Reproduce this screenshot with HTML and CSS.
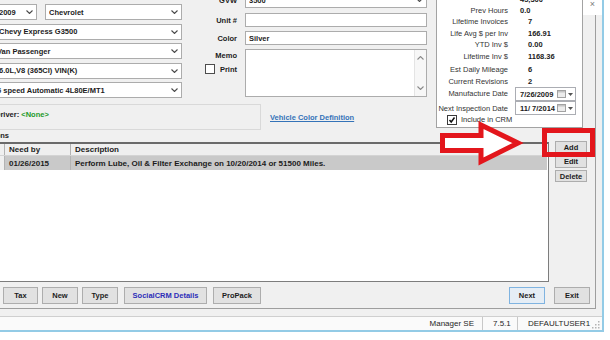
FILE: index.html
```html
<!DOCTYPE html>
<html lang="en">
<head>
  <meta charset="UTF-8" />
  <title>Vehicle - Manager SE</title>
  <link rel="stylesheet" href="styles.css">
</head>
<body>
  <div class="window">
    <div class="frame">
      <div class="top">
        <div class="top-main">
          <div class="fields">
            <div class="vehicle">
              <div class="select-row">
                <div class="select year"><span>2009</span><svg class="chev" viewBox="0 0 7 4"><polyline points="0.5,0.5 3.5,3.5 6.5,0.5"/></svg></div>
                <div class="select make"><span>Chevrolet</span><svg class="chev" viewBox="0 0 7 4"><polyline points="0.5,0.5 3.5,3.5 6.5,0.5"/></svg></div>
              </div>
              <div class="select"><span>Chevy Express G3500</span><svg class="chev" viewBox="0 0 7 4"><polyline points="0.5,0.5 3.5,3.5 6.5,0.5"/></svg></div>
              <div class="select cut"><span>Van Passenger</span><svg class="chev" viewBox="0 0 7 4"><polyline points="0.5,0.5 3.5,3.5 6.5,0.5"/></svg></div>
              <div class="select"><span>6.0L,V8 (365CI) VIN(K)</span><svg class="chev" viewBox="0 0 7 4"><polyline points="0.5,0.5 3.5,3.5 6.5,0.5"/></svg></div>
              <div class="select cut"><span>6 speed Automatic 4L80E/MT1</span><svg class="chev" viewBox="0 0 7 4"><polyline points="0.5,0.5 3.5,3.5 6.5,0.5"/></svg></div>
            </div>

            <div class="details">
              <div class="field gvw">
                <label>GVW</label>
                <div class="select"><span>3500</span><svg class="chev" viewBox="0 0 7 4"><polyline points="0.5,0.5 3.5,3.5 6.5,0.5"/></svg></div>
              </div>
              <div class="field">
                <label>Unit #</label>
                <div class="input"></div>
              </div>
              <div class="field">
                <label>Color</label>
                <div class="input">Silver</div>
              </div>
              <div class="field memo">
                <div class="memo-labels">
                  <label>Memo</label>
                  <div class="print"><span class="box"></span><label>Print</label></div>
                </div>
                <div class="textarea">
                  <div class="vscroll">
                    <svg class="chev" viewBox="0 0 7 4"><polyline points="0.5,3.5 3.5,0.5 6.5,3.5"/></svg>
                    <svg class="chev" viewBox="0 0 7 4"><polyline points="0.5,0.5 3.5,3.5 6.5,0.5"/></svg>
                  </div>
                </div>
              </div>
            </div>
          </div>

          <div class="driver-row">
            <div class="driver-box"><b>Driver:</b> <span class="none">&lt;None&gt;</span></div>
            <a class="color-link" href="#">Vehicle Color Definition</a>
          </div>
          <div class="section-title">Recommendations</div>
        </div>

        <div class="stats">
          <div class="stat-grid">
            <span class="lbl"></span><span class="val near">45,300</span>
            <span class="lbl">Prev Hours</span><span class="val near">0.0</span>
            <span class="lbl">Lifetime Invoices</span><span class="val">7</span>
            <span class="lbl">Life Avg $ per Inv</span><span class="val">166.91</span>
            <span class="lbl">YTD Inv $</span><span class="val">0.00</span>
            <span class="lbl">Lifetime Inv $</span><span class="val">1168.36</span>
            <span class="lbl">Est Daily Mileage</span><span class="val">6</span>
            <span class="lbl">Current Revisions</span><span class="val">2</span>
            <span class="lbl">Manufacture Date</span>
            <div class="date">
              <span>7/26/2009</span>
              <svg class="cal" viewBox="0 0 9 8"><rect x="0.5" y="0.5" width="8" height="7" fill="#ececec" stroke="#a2a2a2"/><rect x="1" y="1" width="7" height="1.5" fill="#c4c4c4"/></svg>
              <svg class="drop" viewBox="0 0 5 3"><polygon points="0,0 5,0 2.5,3"/></svg>
            </div>
            <span class="lbl">Next Inspection Date</span>
            <div class="date">
              <span>11/ 7/2014</span>
              <svg class="cal" viewBox="0 0 9 8"><rect x="0.5" y="0.5" width="8" height="7" fill="#ececec" stroke="#a2a2a2"/><rect x="1" y="1" width="7" height="1.5" fill="#c4c4c4"/></svg>
              <svg class="drop" viewBox="0 0 5 3"><polygon points="0,0 5,0 2.5,3"/></svg>
            </div>
            <div class="crm">
              <span class="check"><svg viewBox="0 0 8 8"><polyline points="1.5,4 3.2,6 6.5,1.5"/></svg></span>
              <span class="crm-text">Include in CRM</span>
            </div>
          </div>
        </div>
      </div>

      <div class="recs">
        <div class="grid">
          <div class="grid-row head">
            <div class="cell rh"></div>
            <div class="cell need">Need by</div>
            <div class="cell desc">Description</div>
          </div>
          <div class="grid-row selected">
            <div class="cell rh"></div>
            <div class="cell need">01/26/2015</div>
            <div class="cell desc">Perform Lube, Oil &amp; Filter Exchange on 10/20/2014 or 51500 Miles.</div>
          </div>
        </div>
        <div class="side-btns">
          <button>Add</button>
          <button>Edit</button>
          <button>Delete</button>
        </div>
      </div>

      <div class="actions">
        <button class="btn-tax">Tax</button>
        <button class="btn-sm">New</button>
        <button class="btn-sm">Type</button>
        <button class="btn-crm">SocialCRM Details</button>
        <button class="btn-propack">ProPack</button>
        <div class="spacer"></div>
        <button class="btn-sm btn-next">Next</button>
        <button class="btn-sm">Exit</button>
      </div>
    </div>

    <div class="status-gap"></div>
    <div class="statusbar">
      <div class="status-fill"></div>
      <div class="status-cell edition">Manager SE</div>
      <div class="status-cell version">7.5.1</div>
      <div class="status-cell user">DEFAULTUSER1</div>
      <div class="grip">
        <svg viewBox="0 0 8 8"><g fill="#b4b4b4"><rect x="6" y="0" width="1.5" height="1.5"/><rect x="3" y="3" width="1.5" height="1.5"/><rect x="6" y="3" width="1.5" height="1.5"/><rect x="0" y="6" width="1.5" height="1.5"/><rect x="3" y="6" width="1.5" height="1.5"/><rect x="6" y="6" width="1.5" height="1.5"/></g></svg>
      </div>
    </div>

    <div class="corner">&times;</div>
  </div>

  <!-- red callout pointing at the Add button -->
  <svg class="callout" viewBox="0 0 610 340">
    <polygon points="442.5,135.5 481,135.5 481,125 518,143 481,161.5 481,150.5 442.5,150.5"/>
    <rect x="544.5" y="130.5" width="48" height="24"/>
  </svg>
</body>
</html>
```

FILE: styles.css
```css
* {
  box-sizing: border-box;
}

body {
  margin: 0;
  background: #ffffff;
  font-family: 'Liberation Sans', Arial, sans-serif;
  font-size: 7.5px;
  color: #1c1c1c;
  overflow: hidden;
}

.window {
  position: relative;
  width: 604px;
  height: 332px;
  background: #f0f0f0;
  border-right: 2px solid #93cbe6;
  border-bottom: 2px solid #93cbe6;
  overflow: hidden;
}

.frame {
  width: 596px;
  height: 309px;
  border-right: 1px solid #9e9e9e;
  border-bottom: 1px solid #9e9e9e;
}

/* ---------- top area ---------- */

.top {
  display: flex;
  height: 142px;
}

.top-main {
  width: 441px;
  margin-left: -5px;
}

.fields {
  display: flex;
  height: 100px;
}

.vehicle {
  width: 187px;
  padding-top: 4px;
  display: flex;
  flex-direction: column;
  gap: 3.5px;
}

.select-row {
  display: flex;
  gap: 8px;
}

.select {
  height: 16px;
  background: #fff;
  border: 1px solid #acacac;
  display: flex;
  align-items: center;
  padding: 0 3px 0 3px;
  font-weight: bold;
}

.select span {
  flex: 1;
  white-space: nowrap;
  overflow: hidden;
}

.select.cut span {
  margin-left: -2px;
}

.chev {
  width: 7px;
  height: 4px;
  flex: none;
}

.chev polyline {
  fill: none;
  stroke: #4a4a4a;
  stroke-width: 1.1;
}

.year {
  width: 42px;
}

.make {
  flex: 1;
}

.details {
  width: 237px;
  margin-left: 8px;
  margin-top: -8px;
  display: flex;
  flex-direction: column;
}

.field {
  display: flex;
  align-items: center;
  gap: 8px;
  margin-bottom: 4px;
}

.field > label,
.memo-labels {
  width: 47px;
  flex: none;
  text-align: right;
  font-weight: bold;
}

.field .select {
  flex: 1;
}

.gvw {
  margin-bottom: 5px;
}

.input {
  flex: 1;
  height: 14px;
  background: #fff;
  border: 1px solid #acacac;
  padding-left: 3px;
  display: flex;
  align-items: center;
  font-weight: bold;
}

.memo {
  align-items: flex-start;
}

.memo-labels label {
  display: block;
  margin-top: 2px;
  line-height: 10px;
}

.print {
  display: flex;
  justify-content: flex-end;
  align-items: center;
  gap: 5px;
  margin-top: 3px;
  height: 10px;
}

.box {
  width: 10px;
  height: 10px;
  background: #fff;
  border: 1px solid #4d4d4d;
}

.textarea {
  flex: 1;
  height: 48px;
  background: #fff;
  border: 1px solid #acacac;
  display: flex;
  justify-content: flex-end;
}

.vscroll {
  width: 12px;
  display: flex;
  flex-direction: column;
  justify-content: space-between;
  align-items: center;
  padding: 6px 0;
  background: #f7f7f7;
  border-left: 1px solid #e4e4e4;
}

.vscroll .chev polyline {
  stroke: #8a8a8a;
}

.driver-row {
  display: flex;
  align-items: center;
  height: 26px;
  margin-top: 4px;
}

.driver-box {
  width: 271px;
  height: 26px;
  margin-left: -5px;
  border: 1px solid #d9d9d9;
  padding: 5px 0 0 4px;
  line-height: 10px;
  font-weight: bold;
}

.driver-box .none {
  color: #1c9a2a;
}

.color-link {
  margin-left: 9px;
  margin-top: 2px;
  color: #3473b8;
  font-weight: bold;
  text-decoration: underline;
  line-height: 10px;
}

.section-title {
  width: 100px;
  margin-left: -86px;
  height: 12px;
  line-height: 11px;
  text-align: right;
  font-weight: bold;
}

/* ---------- stats panel ---------- */

.stats {
  width: 147px;
  height: 128px;
  background: #fff;
  border: 1px solid #a3a3a3;
  border-top: none;
}

.stat-grid {
  display: grid;
  grid-template-columns: 71px 1fr;
  grid-template-rows: 10.5px 11.5px 11.5px 11.5px 11.5px 11.5px 14px 10px 15px 14px 9px;
  column-gap: 7px;
  align-items: center;
  margin-top: -6px;
}

.lbl {
  text-align: right;
  white-space: nowrap;
  color: #343434;
}

.val {
  padding-left: 13px;
  font-weight: bold;
}

.val.near {
  padding-left: 5px;
}

.date {
  width: 61px;
  height: 14px;
  align-self: end;
  background: #fff;
  border: 1px solid #abadb3;
  display: flex;
  align-items: center;
  padding: 0 2px 0 4px;
  font-weight: bold;
  white-space: pre;
}

.date span {
  flex: 1;
}

.cal {
  width: 9px;
  height: 8px;
}

.drop {
  width: 5px;
  height: 3px;
  margin-left: 2px;
  fill: #555;
}

.crm {
  grid-column: 1 / -1;
  display: flex;
  align-items: center;
  gap: 4px;
  padding-left: 10px;
}

.crm-text {
  color: #2e2e2e;
}

.check {
  width: 10px;
  height: 10px;
  background: #fff;
  border: 1px solid #3a3a3a;
  display: flex;
}

.check svg {
  width: 8px;
  height: 8px;
}

.check polyline {
  fill: none;
  stroke: #111;
  stroke-width: 1.5;
}

/* ---------- recommendations grid ---------- */

.recs {
  display: flex;
  height: 140px;
}

.grid {
  width: 550px;
  margin-left: -1px;
  background: #fff;
  border: 1px solid #7d7d7d;
  border-top: 2px solid #6a6a6a;
}

.grid-row {
  display: flex;
  height: 14px;
}

.grid-row.head {
  height: 12px;
  background: #efefef;
  border-bottom: 1px solid #d4d4d4;
}

.cell {
  display: flex;
  align-items: center;
  padding-left: 4px;
  font-size: 8px;
  font-weight: bold;
  white-space: nowrap;
}

.rh {
  width: 5px;
  padding: 0;
  background: #f0f0f0;
  border-right: 1px solid #b3b3b3;
}

.need {
  width: 66px;
  border-right: 1px solid #b3b3b3;
}

.desc {
  flex: 1;
}

.selected .need,
.selected .desc {
  background: #c9c9c9;
}

.selected .desc {
  margin-right: 1px;
}

.side-btns {
  flex: 1;
  display: flex;
  flex-direction: column;
  gap: 2.5px;
  margin-top: -1px;
  padding-left: 6px;
}

button {
  font-family: 'Liberation Sans', Arial, sans-serif;
  font-size: 7.5px;
  font-weight: bold;
  color: #1c1c1c;
  background: #e1e1e1;
  border: 1px solid #adadad;
  border-radius: 0;
  padding: 0;
}

.side-btns button {
  width: 32px;
  height: 12px;
}

/* ---------- bottom buttons ---------- */

.actions {
  display: flex;
  align-items: flex-start;
  height: 26px;
  padding: 5px 5px 0 3px;
  gap: 4px;
}

.actions button {
  height: 17px;
}

.btn-tax {
  width: 35px;
}

.btn-sm {
  width: 36px;
}

.btn-crm {
  width: 83px;
  margin-left: 2px;
  color: #2d2db8;
}

.btn-propack {
  width: 48px;
  margin-left: 2px;
}

.spacer {
  flex: 1;
}

.btn-next {
  margin-right: 5px;
  background: #e5edf5;
  border-color: #7fb3e0;
}

/* ---------- status bar ---------- */

.status-gap {
  height: 7px;
}

.statusbar {
  display: flex;
  height: 14px;
  border-top: 1px solid #cfcfcf;
  background: #fafafa;
  font-size: 8px;
  line-height: 13px;
  color: #262626;
}

.status-fill {
  flex: 1;
}

.status-cell {
  border-right: 1px solid #c8c8c8;
  white-space: nowrap;
}

.edition {
  width: 70px;
  text-align: right;
  padding-right: 8px;
}

.version {
  width: 35px;
  padding-left: 10px;
}

.user {
  width: 72px;
  padding-left: 10px;
  border-right: none;
}

.grip {
  width: 12px;
  display: flex;
  align-items: flex-end;
  padding: 0 2px 1px 2px;
}

.grip svg {
  width: 8px;
  height: 8px;
}

.corner {
  position: absolute;
  left: 583px;
  top: 0;
  width: 19px;
  height: 15px;
  background: #fff;
  color: #7a7a7a;
  font-size: 9px;
  line-height: 9px;
  text-align: right;
  padding-right: 7px;
}

.callout {
  position: absolute;
  left: 0;
  top: 0;
  width: 610px;
  height: 340px;
  pointer-events: none;
}

.callout polygon,
.callout rect {
  fill: none;
  stroke: #e3161c;
  stroke-width: 5;
}

.callout polygon {
  fill: #fff;
}
```
